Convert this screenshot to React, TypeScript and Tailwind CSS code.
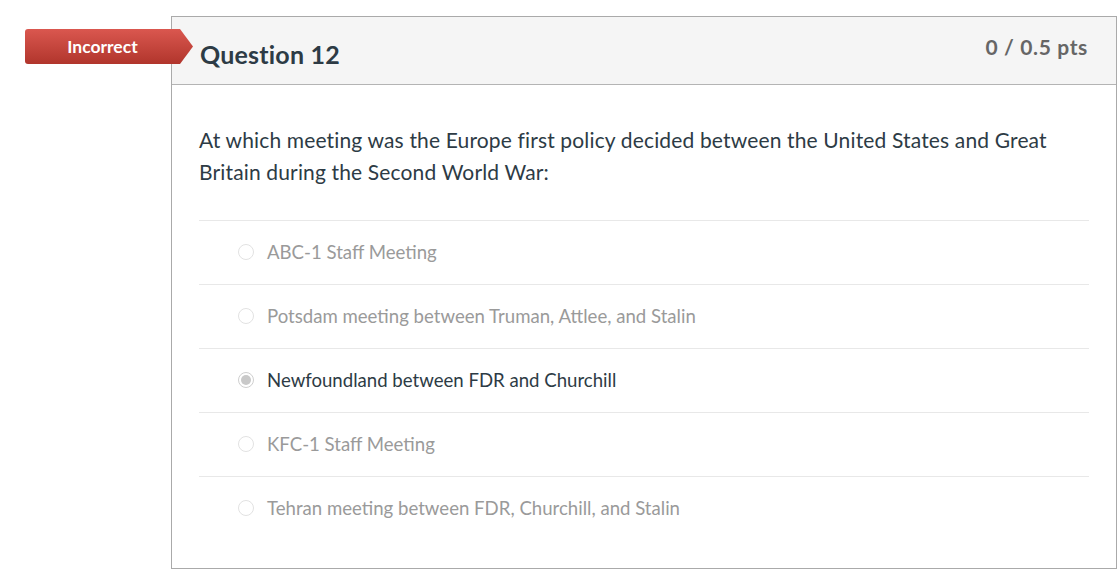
import React from "react";

const answers = [
  { text: "ABC-1 Staff Meeting", selected: false },
  { text: "Potsdam meeting between Truman, Attlee, and Stalin", selected: false },
  { text: "Newfoundland between FDR and Churchill", selected: true },
  { text: "KFC-1 Staff Meeting", selected: false },
  { text: "Tehran meeting between FDR, Churchill, and Stalin", selected: false },
];

function Radio({ selected }: { selected: boolean }) {
  return (
    <svg width="16" height="16" viewBox="0 0 16 16" className="shrink-0 mb-[2px]">
      <circle cx="8" cy="8" r="7.5" fill="#fff" stroke={selected ? "#cfcfcf" : "#e2e2e2"} strokeWidth="1" />
      {selected && <circle cx="8" cy="8" r="5" fill="#c9c9c9" />}
    </svg>
  );
}

export default function App() {
  return (
    <div className="relative w-[1120px] h-[572px] bg-white font-['Lato','Noto_Sans',sans-serif]">
      <div className="absolute left-[25px] top-[29px] w-[168px] h-[35px] flex items-center bg-gradient-to-b from-[#da574f] to-[#b1352c] rounded-l-[3px] [clip-path:polygon(0_0,155px_0,168px_50%,155px_100%,0_100%)] z-10">
        <span className="w-[155px] text-center text-white font-bold text-[17.5px] leading-none pt-[1px]">Incorrect</span>
      </div>
      <div className="pt-[16px] pl-[171px]">
        <div className="w-[946px] h-[553px] border border-[#aaaaaa] flex flex-col">
          <div className="h-[68px] bg-[#f5f5f5] border-b border-[#b4b4b4] px-[28px] flex justify-between items-start">
            <div className="mt-[23px] text-[25px] leading-[29px] font-bold text-[#2d3b45] tracking-[0.2px]">Question 12</div>
            <div className="mt-[18px] text-[21px] leading-[24px] font-bold text-[#666666] tracking-[0.65px]">0 / 0.5 pts</div>
          </div>
          <div className="px-[27px] pt-[39px]">
            <p className="text-[21px] leading-[32px] text-[#2d3b45] tracking-[0.15px]">
              At which meeting was the Europe first policy decided between the United States and Great Britain during the Second World War:
            </p>
            <div className="mt-[32px]">
              {answers.map((a) => (
                <div key={a.text} className="h-[64px] border-t border-[#e8e8e8] flex items-center pl-[39px] gap-[13px]">
                  <Radio selected={a.selected} />
                  <span className={`text-[18.6px] mt-[1px] ${a.selected ? "text-[#2d3b45]" : "text-[#9a9a9a]"}`}>{a.text}</span>
                </div>
              ))}
            </div>
          </div>
        </div>
      </div>
    </div>
  );
}
